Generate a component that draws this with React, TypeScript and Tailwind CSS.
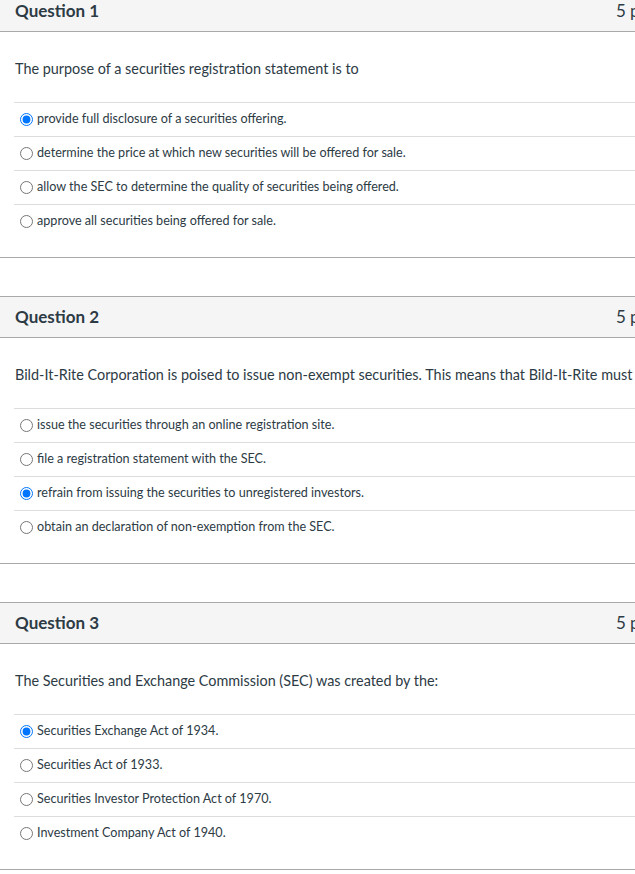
import React from 'react';

type Question = {
  title: string;
  points: string;
  text: string;
  answers: string[];
  selected: number;
};

const questions: Question[] = [
  {
    title: 'Question 1',
    points: '5 pts',
    text: 'The purpose of a securities registration statement is to',
    answers: [
      'provide full disclosure of a securities offering.',
      'determine the price at which new securities will be offered for sale.',
      'allow the SEC to determine the quality of securities being offered.',
      'approve all securities being offered for sale.',
    ],
    selected: 0,
  },
  {
    title: 'Question 2',
    points: '5 pts',
    text: 'Bild-It-Rite Corporation is poised to issue non-exempt securities. This means that Bild-It-Rite must',
    answers: [
      'issue the securities through an online registration site.',
      'file a registration statement with the SEC.',
      'refrain from issuing the securities to unregistered investors.',
      'obtain an declaration of non-exemption from the SEC.',
    ],
    selected: 2,
  },
  {
    title: 'Question 3',
    points: '5 pts',
    text: 'The Securities and Exchange Commission (SEC) was created by the:',
    answers: [
      'Securities Exchange Act of 1934.',
      'Securities Act of 1933.',
      'Securities Investor Protection Act of 1970.',
      'Investment Company Act of 1940.',
    ],
    selected: 0,
  },
];

const QuestionCard = ({ q, index }: { q: Question; index: number }) => {
  return (
    <div className="mb-[38px] border-b border-[#a9a9a9]">
      <div className="h-[42px] flex items-center justify-between px-[15px] bg-[#f5f5f5] border-y border-[#a9a9a9]">
        <span className="text-[17px] font-bold">{q.title}</span>
        <span className="text-[17px]">{q.points}</span>
      </div>
      <div className="pl-[14px] pb-[19px]">
        <p className="h-[70px] flex items-center pl-px pt-[3px] text-[14.4px] whitespace-nowrap">{q.text}</p>
        {q.answers.map((a, i) => (
          <label
            key={i}
            className="h-[34px] flex items-center border-t border-[#dddddd] pl-[6px] text-[12.6px]"
          >
            <input
              type="radio"
              name={`q${index}`}
              defaultChecked={i === q.selected}
              className="w-[13px] h-[13px] m-0 mr-[4px]"
            />
            <span>{a}</span>
          </label>
        ))}
      </div>
    </div>
  );
};

const App = () => {
  return (
    <div className="w-[635px] h-[874px] overflow-hidden bg-white text-[#2d3b45] font-['Lato',sans-serif]">
      <div className="w-[668px] -mt-[10px]">
        {questions.map((q, i) => (
          <QuestionCard key={i} q={q} index={i} />
        ))}
      </div>
    </div>
  );
};

export default App;
